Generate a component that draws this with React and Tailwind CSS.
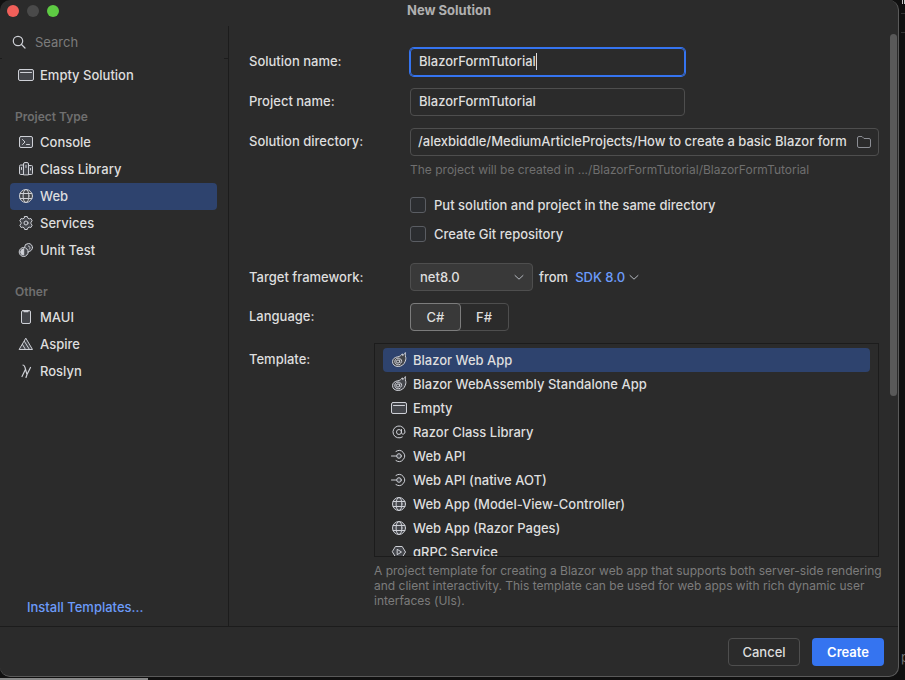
import { useState } from 'react';

/* ICONS */
const Svg = ({ children, size = 16 }) => (
  <svg width={size} height={size} viewBox="0 0 16 16" fill="none" stroke="#CED0D6" strokeWidth="1" strokeLinecap="round" strokeLinejoin="round" className="shrink-0" aria-hidden="true">
    {children}
  </svg>
);

const SearchIcon = () => (
  <Svg>
    <circle cx="7" cy="7" r="4.7" strokeWidth="1.2" />
    <path d="M10.5 10.5 14 14" strokeWidth="1.2" />
  </Svg>
);

const WindowIcon = () => (
  <Svg>
    <rect x="0.5" y="2.5" width="15" height="11" rx="1.5" fill="#43454A" />
    <path d="M2.5 5.5h11" />
  </Svg>
);

const ConsoleIcon = () => (
  <Svg>
    <rect x="1.5" y="2.5" width="13" height="11" rx="1.5" fill="#43454A" />
    <path d="M4.5 5.5 7 8l-2.5 2.5M8.5 10.5h3" />
  </Svg>
);

const LibraryIcon = () => (
  <Svg>
    <path d="M1.5 5a1 1 0 0 1 1-1h3v9.500h-3a1 1 0 0 1-1-1z" fill="#43454A" />
    <path d="M10.500 4.500h3a1 1 0 0 1 1 1v7a1 1 0 0 1-1 1h-3z" fill="#43454A" />
    <path d="M5.500 13.500V3a1.500 1.500 0 0 1 1.500-1.500h2A1.500 1.500 0 0 1 10.500 3v10.500z" fill="#43454A" />
    <path d="M3.500 6.500v2M8 4.500v2M12.500 7.500v1.500" />
  </Svg>
);

const GlobeIcon = () => (
  <Svg>
    <circle cx="8" cy="8" r="6.5" fill="#43454A" />
    <ellipse cx="8" cy="8" rx="2.900" ry="6.5" />
    <path d="M2.200 5.500h11.600M2.200 10.500h11.600" />
  </Svg>
);

const GearIcon = () => (
  <Svg>
    <path d="M6.700 1.500h2.600l.6 1.700 1.200.7 1.800-.4 1.300 2.300L13 7.200v1.600l1.200 1.400-1.300 2.300-1.800-.4-1.200.7-.6 1.700H6.700l-.6-1.700-1.200-.7-1.800.4-1.300-2.300L3 8.800V7.200L1.800 5.800l1.300-2.300 1.800.4 1.200-.7z" fill="#43454A" />
    <circle cx="8" cy="8" r="2" />
  </Svg>
);

const UnitTestIcon = () => (
  <Svg>
    <circle cx="10.500" cy="5.500" r="4" fill="#43454A" />
    <path d="M10.500 4c1.700.4 1.900 2.200 1 3.200" />
    <circle cx="5.700" cy="10" r="4.500" fill="#43454A" />
    <path d="M5.700 7v6a3 3 0 0 1 0-6z" fill="#CED0D6" />
  </Svg>
);

const PhoneIcon = () => (
  <Svg>
    <rect x="3.500" y="1.500" width="9" height="13" rx="1.500" fill="#43454A" />
    <path d="M6 2.500h4" strokeWidth="1.300" />
  </Svg>
);

const AspireIcon = () => (
  <Svg>
    <path d="M8 2.500 14.500 13.500h-13z" fill="#43454A" />
    <path d="M6.500 5.500 11.500 13.500M4.500 8.500 7.500 13.500" />
  </Svg>
);

const RoslynIcon = () => (
  <Svg>
    <path d="M5 2c1.200 0 1.500.8 1.900 2.200L9 11.500M7.400 6.500 4 13.500M12.500 4.500 9 11.500 8 14.500" strokeWidth="1.200" />
  </Svg>
);

const BlazorIcon = () => (
  <Svg>
    <path d="M14.300 1c.4 1.300.3 2.200 0 3 .9 1.700.6 3.600 0 5.200-1.100 3.200-3.700 5.300-7.100 5.300-3.400 0-5.700-2-5.700-4.800C1.500 6.800 4 5.100 6.800 4.800 8.600 4.500 10.300 3.500 11.300 1.800l.3 1.700C12.800 3 13.700 2 14.300 1z" fill="#43454A" />
    <circle cx="7" cy="9.500" r="1.600" />
    <path d="M8.700 7.900v2.200c0 1.400 2 1.200 2-.6 0-2.200-1.600-3.400-3.700-3.400a3.400 3.400 0 1 0 2 6.300" />
  </Svg>
);

const AtIcon = () => (
  <Svg>
    <circle cx="8" cy="8" r="2.500" />
    <path d="M10.500 5.500v3.300c0 2 3.500 1.800 3.500-.8a6 6 0 1 0-2.700 5" />
  </Svg>
);

const ApiIcon = () => (
  <Svg>
    <circle cx="8" cy="8" r="2.300" fill="#43454A" />
    <path d="M0.500 8h5M5 3.400A5.500 5.500 0 1 1 5 12.600" />
  </Svg>
);

const GrpcIcon = () => (
  <Svg>
    <path d="M4.800 2.500h6.400L14.500 8l-3.300 5.500H4.800L1.500 8z" fill="#43454A" />
    <path d="M6.500 5.500 10.500 8l-4 2.500z" />
  </Svg>
);

const FolderIcon = () => (
  <svg width="16" height="16" viewBox="0 0 16 16" fill="none" stroke="#8C8E94" strokeLinejoin="round" aria-hidden="true">
    <path d="M1.500 4a1.500 1.500 0 0 1 1.500-1.500h3L8 4.500h5A1.500 1.500 0 0 1 14.500 6v6a1.500 1.500 0 0 1-1.500 1.500H3A1.500 1.500 0 0 1 1.500 12z" />
  </svg>
);

const Chevron = ({ className }) => (
  <svg width="10" height="10" viewBox="0 0 10 10" fill="none" stroke="#B4B8BF" strokeLinecap="round" strokeLinejoin="round" className={className} aria-hidden="true">
    <path d="M1 3.500 5 7.200l4-3.700" />
  </svg>
);

/* DATA */
const projectTypes = [
  { name: 'Console', Icon: ConsoleIcon },
  { name: 'Class Library', Icon: LibraryIcon },
  { name: 'Web', Icon: GlobeIcon },
  { name: 'Services', Icon: GearIcon },
  { name: 'Unit Test', Icon: UnitTestIcon },
];

const otherTypes = [
  { name: 'MAUI', Icon: PhoneIcon },
  { name: 'Aspire', Icon: AspireIcon },
  { name: 'Roslyn', Icon: RoslynIcon },
];

const templates = [
  { name: 'Blazor Web App', Icon: BlazorIcon },
  { name: 'Blazor WebAssembly Standalone App', Icon: BlazorIcon },
  { name: 'Empty', Icon: WindowIcon },
  { name: 'Razor Class Library', Icon: AtIcon },
  { name: 'Web API', Icon: ApiIcon },
  { name: 'Web API (native AOT)', Icon: ApiIcon },
  { name: 'Web App (Model-View-Controller)', Icon: GlobeIcon },
  { name: 'Web App (Razor Pages)', Icon: GlobeIcon },
  { name: 'gRPC Service', Icon: GrpcIcon },
];

const SidebarItem = ({ name, Icon, active, onClick }) => (
  <button type="button" onClick={onClick} className={`flex h-[27px] w-full items-center gap-1.5 rounded px-2 pb-px text-left ${active ? 'bg-[#2E436E]' : ''}`}>
    <Icon />
    {name}
  </button>
);

const SidebarHeading = ({ children }) => (
  <h2 className="mt-4 flex h-6 items-center px-[5px] text-xs font-semibold text-[#6F6F6F]">{children}</h2>
);

export default function App() {
  const [section, setSection] = useState('Web');
  const [template, setTemplate] = useState('Blazor Web App');
  const [language, setLanguage] = useState('C#');
  const [solution, setSolution] = useState('BlazorFormTutorial');
  const [project, setProject] = useState('BlazorFormTutorial');
  const [directory, setDirectory] = useState('/alexbiddle/MediumArticleProjects/How to create a basic Blazor form');

  return (
    <div className="flex h-screen flex-col overflow-hidden bg-[#101010] font-['Inter',sans-serif] text-[13px] leading-4 font-medium text-[#DEDEDE]">
      <div className="flex min-h-0 flex-1">
        <div className="flex min-w-0 flex-1 flex-col rounded-[10px] border-r border-b border-[#5A5A5A] bg-[#2B2B2B]">
          {/* Title bar */}
          <header className="grid h-[26px] grid-cols-[1fr_auto_1fr] items-start px-[7px]">
            <div className="flex gap-2 pt-[5px]">
              <button type="button" aria-label="Close" className="size-3 rounded-full bg-[#F1605A]" />
              <button type="button" aria-label="Minimize" className="size-3 rounded-full bg-[#4A4A4A]" />
              <button type="button" aria-label="Zoom" className="size-3 rounded-full bg-[#5ECB43]" />
            </div>
            <h1 className="pt-0.5 font-bold text-[#B0B0B0]">New Solution</h1>
          </header>

          <div className="flex min-h-0 flex-1">
            {/* Sidebar */}
            <aside className="flex w-[229px] shrink-0 flex-col border-r border-[#1C1C1C]">
              <label className="flex h-8 items-center gap-2 pl-[11px]">
                <SearchIcon />
                <input type="text" placeholder="Search" aria-label="Search" className="min-w-0 flex-1 bg-transparent font-normal outline-none placeholder:text-[#7C7C7C]" />
              </label>
              <div className="flex justify-between">
                <span className="h-px w-0.5 bg-[#1C1C1C]" />
                <span className="h-px w-1 bg-[#1C1C1C]" />
              </div>
              <nav className="flex-1 pt-[3px] pr-[11px] pl-2.5">
                <SidebarItem name="Empty Solution" Icon={WindowIcon} active={section === 'Empty Solution'} onClick={() => setSection('Empty Solution')} />
                <SidebarHeading>Project Type</SidebarHeading>
                {projectTypes.map(t => (
                  <SidebarItem key={t.name} {...t} active={section === t.name} onClick={() => setSection(t.name)} />
                ))}
                <SidebarHeading>Other</SidebarHeading>
                {otherTypes.map(t => (
                  <SidebarItem key={t.name} {...t} active={section === t.name} onClick={() => setSection(t.name)} />
                ))}
              </nav>
              <a href="#templates" className="mb-[11px] ml-[27px] text-[#6B9BFA]">Install Templates...</a>
            </aside>

            {/* Form */}
            <main className="flex min-w-0 flex-1">
              <form className="min-w-0 flex-1 pt-[22px] pl-5" onSubmit={e => e.preventDefault()}>
                <div className="grid grid-cols-[161px_minmax(0,1fr)] items-center gap-y-3">
                  <label htmlFor="solution" className="pb-0.5">Solution name:</label>
                  <div className="relative max-w-[275px]">
                    <input
                      id="solution"
                      value={solution}
                      onChange={e => setSolution(e.target.value)}
                      className="peer h-7 w-full rounded border border-[#3574F0] bg-transparent px-2 pb-0.5 ring-1 ring-[#3574F0] outline-none"
                    />
                    {/* text cursor, replaced by the native one on focus */}
                    <span className="pointer-events-none absolute top-[5px] left-[126px] h-[17px] w-px bg-[#DEDEDE] peer-focus:hidden" />
                  </div>

                  <label htmlFor="project" className="pb-0.5">Project name:</label>
                  <div className="max-w-[275px]">
                    <input
                      id="project"
                      value={project}
                      onChange={e => setProject(e.target.value)}
                      className="h-7 w-full rounded border border-[#4E4E4E] bg-transparent px-2 pb-0.5 outline-none"
                    />
                  </div>

                  <label htmlFor="directory" className="pb-0.5">Solution directory:</label>
                  <div className="flex h-7 items-center rounded border border-[#4E4E4E] pr-1.5 pl-[7px]">
                    <input id="directory" value={directory} onChange={e => setDirectory(e.target.value)} className="min-w-0 flex-1 bg-transparent pb-0.5 outline-none" />
                    <button type="button" aria-label="Browse"><FolderIcon /></button>
                  </div>
                </div>

                <div className="pl-[161px]">
                  <p className="mt-1.5 text-xs leading-4 font-normal text-[#6F6F6F]">The project will be created in .../BlazorFormTutorial/BlazorFormTutorial</p>
                  <label className="mt-[19px] flex items-center gap-2">
                    <input type="checkbox" className="size-4 appearance-none rounded-[3px] border border-[#5A5D63] bg-[#2B2D30] checked:bg-[#3574F0]" />
                    Put solution and project in the same directory
                  </label>
                  <label className="mt-[13px] flex items-center gap-2">
                    <input type="checkbox" className="size-4 appearance-none rounded-[3px] border border-[#5A5D63] bg-[#2B2D30] checked:bg-[#3574F0]" />
                    Create Git repository
                  </label>
                </div>

                <div className="mt-[21px] grid grid-cols-[161px_minmax(0,1fr)] items-center gap-y-3">
                  <label htmlFor="framework">Target framework:</label>
                  <div className="flex items-center">
                    <div className="relative w-[123px]">
                      <select id="framework" className="h-7 w-full appearance-none rounded border border-[#4E4E4E] bg-[#393939] px-[9px] outline-none">
                        <option>net8.0</option>
                      </select>
                      <Chevron className="pointer-events-none absolute top-[9px] right-[9px]" />
                    </div>
                    <span className="ml-1.5">from</span>
                    <button type="button" className="ml-[7px] flex items-center gap-1 text-[#6B9BFA]">
                      SDK 8.0
                      <Chevron />
                    </button>
                  </div>

                  <span className="pb-0.5">Language:</span>
                  <div className="flex h-7 w-[99px] rounded border border-[#4E4E4E]">
                    {['C#', 'F#'].map(l => (
                      <button
                        key={l}
                        type="button"
                        aria-pressed={language === l}
                        onClick={() => setLanguage(l)}
                        className={`-my-px rounded border ${language === l ? '-mx-px w-[51px] border-[#7C7C7C] bg-[#393939]' : 'flex-1 border-transparent'}`}
                      >
                        {l}
                      </button>
                    ))}
                  </div>
                </div>

                <div className="mt-3 flex">
                  <span className="w-[125px] shrink-0 pt-2">Template:</span>
                  <div className="min-w-0 flex-1">
                    <ul className="h-[214px] overflow-hidden border border-[#1C1C1C] px-2 pt-1">
                      {templates.map(({ name, Icon }) => (
                        <li key={name}>
                          <button
                            type="button"
                            onClick={() => setTemplate(name)}
                            className={`flex h-6 w-full items-center gap-1.5 rounded px-2 text-left ${template === name ? 'bg-[#2E436E]' : ''}`}
                          >
                            <Icon />
                            {name}
                          </button>
                        </li>
                      ))}
                    </ul>
                    <p className="mt-1.5 -mr-2 text-xs leading-[15px] font-normal text-[#7C7C7C]">
                      A project template for creating a Blazor web app that supports both server-side rendering and client interactivity. This template can be used for web apps with rich dynamic user interfaces (UIs).
                    </p>
                  </div>
                </div>
              </form>
              {/* Scrollbar */}
              <div className="w-[19px] shrink-0 pt-2 pl-[11px]">
                <div className="h-[362px] w-[7px] rounded-full bg-[#595959]" />
              </div>
            </main>
          </div>

          {/* Footer */}
          <footer className="flex h-[50px] shrink-0 items-start justify-end gap-3 border-t border-[#1C1C1C] pt-[11px] pr-3.5">
            <button type="button" className="h-7 w-[72px] rounded border border-[#4E4E4E]">Cancel</button>
            <button type="submit" className="h-7 w-[72px] rounded bg-[#3574F0] font-semibold text-white">Create</button>
          </footer>
        </div>

        {/* Window behind, right edge */}
        <div className="flex w-1.5 shrink-0 flex-col overflow-hidden pl-0.5 font-normal text-[#6F6F6F]">
          <div className="flex h-[13px] gap-px pl-px">
            <span className="h-1 w-px bg-[#C8C8C8]" />
            <span className="h-1 w-px bg-[#C8C8C8]" />
          </div>
          <div className="h-5 border-y border-[#333333]" />
          <span className="mt-auto mb-3">p</span>
        </div>
      </div>
      {/* Window behind, bottom edge */}
      <div className="h-[3px] shrink-0 pt-px">
        <div className="h-0.5 w-[148px] bg-[#8A8A8A]" />
      </div>
    </div>
  );
}
